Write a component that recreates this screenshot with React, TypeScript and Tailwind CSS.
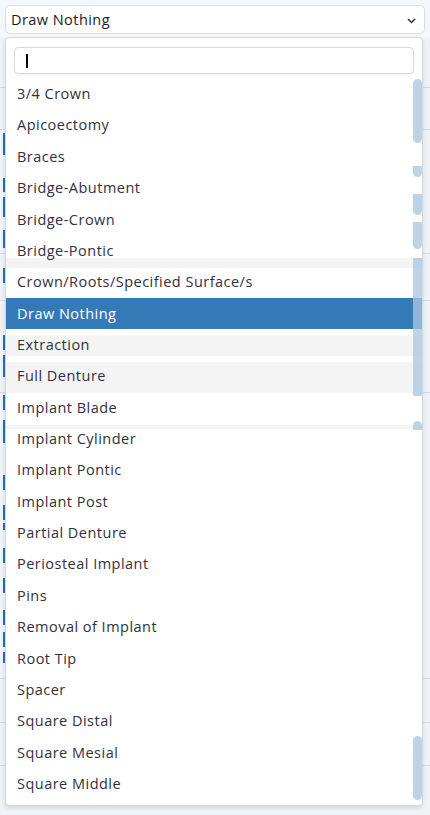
import React from "react";

const items = [
  "3/4 Crown",
  "Apicoectomy",
  "Braces",
  "Bridge-Abutment",
  "Bridge-Crown",
  "Bridge-Pontic",
  "Crown/Roots/Specified Surface/s",
  "Draw Nothing",
  "Extraction",
  "Full Denture",
  "Implant Blade",
  "Implant Cylinder",
  "Implant Pontic",
  "Implant Post",
  "Partial Denture",
  "Periosteal Implant",
  "Pins",
  "Removal of Implant",
  "Root Tip",
  "Spacer",
  "Square Distal",
  "Square Mesial",
  "Square Middle",
];

const bgRows = [50, 42, 124, 47, 92, 286, 44, 43, 50];

const dashes: [number, number][] = [
  [133, 155], [178, 192], [197, 217], [230, 248], [268, 283],
  [335, 350], [355, 377], [395, 410], [420, 443], [475, 490],
  [505, 520], [523, 530], [548, 563], [578, 593], [610, 625],
  [632, 647], [652, 663],
];

// page coordinates; panel top = 37 (+1 border)
const bands: [number, number][] = [
  [258, 268], [335, 356], [362, 393], [425, 429],
];

const thumbs: { t: number; b: number; r: string }[] = [
  { t: 79, b: 143, r: "rounded-full" },
  { t: 166, b: 177, r: "rounded-b-full" },
  { t: 194, b: 215, r: "rounded-b-full" },
  { t: 222, b: 249, r: "rounded-b-full" },
  { t: 258, b: 356, r: "rounded-none" },
  { t: 356, b: 396, r: "rounded-b-[2px]" },
  { t: 421, b: 430, r: "rounded-t-full" },
  { t: 736, b: 800, r: "rounded-full" },
];

export default function App() {
  const font = { fontFamily: "'Open Sans', 'Noto Sans', sans-serif" };
  return (
    <div
      className="relative w-[430px] h-[815px] overflow-hidden bg-[#f4f7fb]"
      style={font}
    >
      {/* top select */}
      <div className="px-[5px] pt-[5px] pb-[4px]">
        <div className="h-[29px] bg-white border border-[#d9dbe6] rounded-[5px] flex items-center justify-between pl-[5px] pr-[8px]">
          <span className="text-[14.5px] text-[#1c1c28] tracking-[0.45px]">Draw Nothing</span>
          <svg width="9" height="6" viewBox="0 0 9 6" className="mt-[2px]">
            <path d="M1 1l3.5 3.5L8 1" fill="none" stroke="#333" strokeWidth="1.5" />
          </svg>
        </div>
      </div>

      {/* background rows */}
      <div className="flex flex-col">
        {bgRows.map((h, i) => (
          <div
            key={i}
            className="border-b border-[#d3d7df] bg-[#eff2f6]"
            style={{ height: h }}
          />
        ))}
      </div>

      {/* blue dashes behind left edge */}
      {dashes.map(([a, b], i) => (
        <div
          key={i}
          className="absolute left-[3px] w-[2px] bg-[#1f6fb5]"
          style={{ top: a, height: b - a }}
        />
      ))}

      {/* dropdown panel */}
      <div className="absolute left-[5px] top-[37px] w-[418px] h-[769px] bg-white border border-[#d6d9e2] rounded-[4px] shadow-[0_2px_4px_rgba(0,0,0,0.12)] overflow-hidden">
        {bands.map(([a, b], i) => (
          <div
            key={i}
            className="absolute left-0 right-0 bg-[#f4f4f4]"
            style={{ top: a - 38, height: b - a }}
          />
        ))}
        <div className="relative pt-[9px] px-[8px]">
          <div className="h-[27px] border border-[#d6d9e4] rounded-[4px] bg-white shadow-[0_1px_2px_rgba(0,0,0,0.06)] flex items-center pl-[11px]">
            <div className="w-[1.5px] h-[14px] bg-black" />
          </div>
        </div>
        <div className="relative mt-[4.3px] flex flex-col">
          {items.map((it) => {
            const sel = it === "Draw Nothing";
            return (
              <div
                key={it}
                className={
                  "h-[31.36px] flex items-center pl-[11px] text-[14.5px] tracking-[0.48px] " +
                  (sel ? "bg-[#337ab7] text-white" : "text-[#32303e]")
                }
              >
                {it}
              </div>
            );
          })}
        </div>
        {thumbs.map((t, i) => (
          <div
            key={i}
            className={"absolute left-[407px] w-[9px] bg-[rgba(169,200,222,0.78)] " + t.r}
            style={{ top: t.t - 38, height: t.b - t.t }}
          />
        ))}
      </div>
    </div>
  );
}
